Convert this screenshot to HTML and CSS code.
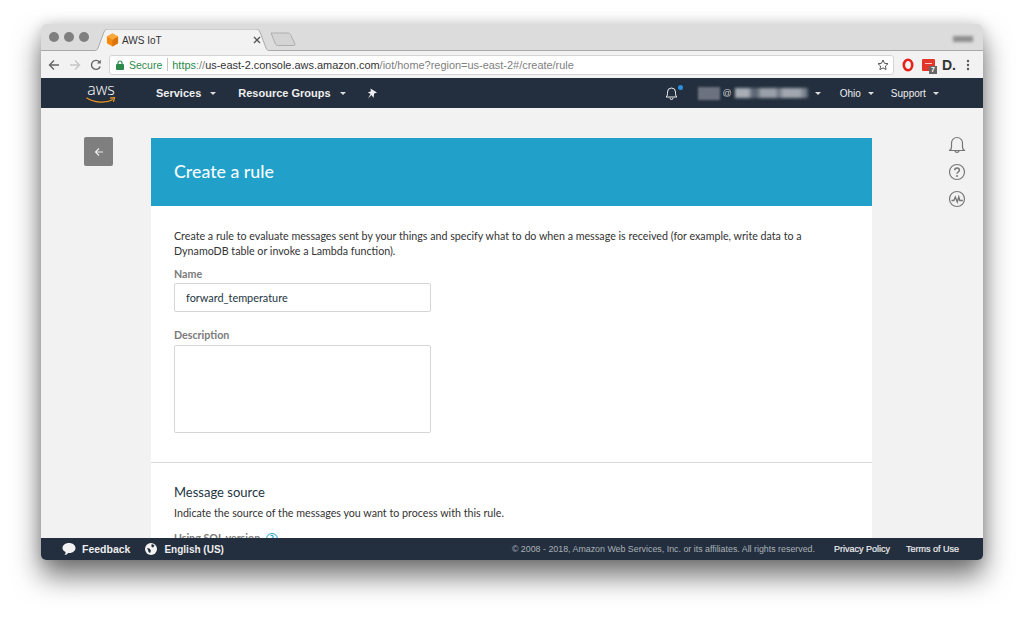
FILE: index.html
```html
<!DOCTYPE html>
<html lang="en">
<head>
    <meta charset="UTF-8">
    <meta name="viewport" content="width=device-width, initial-scale=1.0">
    <title>AWS IoT - Create a rule</title>
    <link rel="stylesheet" href="styles.css">
</head>
<body>
    <div class="window">
        <!-- Browser tab strip -->
        <div class="tabstrip">
            <div class="lights"><span></span><span></span><span></span></div>
            <div class="tab">
                <svg class="tab-shape" width="178" height="22" viewBox="0 0 178 22"><path d="M0 22h1c2 0 3-1 4-3L11 3c1-2 2-3 4-3h148c2 0 3 1 4 3l6 16c1 2 2 3 4 3h1" fill="#f2f2f2" stroke="#a9a9a9"/></svg>
                <svg class="tab-icon" width="13" height="14" viewBox="0 0 14 14"><path d="M7 0l6 3.2v7.400L7 14l-6-3.400V3.200z" fill="#f58a0b"/><path d="M7 6.600l6-3.400v7.400L7 14z" fill="#d9730a"/><path d="M7 0l6 3.200-6 3.400-6-3.400z" fill="#fba83a"/></svg>
                <span class="tab-title">AWS IoT</span>
                <svg class="tab-close" width="8" height="8" viewBox="0 0 8 8"><path d="M1 1l6 6M7 1L1 7" stroke="#555" stroke-width="1.300"/></svg>
            </div>
            <svg class="new-tab" width="26" height="14" viewBox="0 0 26 14"><path d="M1 1h17c1 0 2 .5 2.500 1.500L25 12c.3 1-.2 1.500-1 1.500H8c-1 0-2-.5-2.500-1.500L1 1z" fill="#d4d4d4" stroke="#aeaeae"/></svg>
            <span class="profile"></span>
        </div>

        <!-- Browser toolbar -->
        <div class="toolbar">
            <svg class="tool" width="12" height="12" viewBox="0 0 12 12"><path d="M11 6H2M6 1.500L1.500 6 6 10.500" fill="none" stroke="#666" stroke-width="1.400"/></svg>
            <svg class="tool" width="12" height="12" viewBox="0 0 12 12"><path d="M1 6h9M6 1.500L10.500 6 6 10.500" fill="none" stroke="#c6c6c6" stroke-width="1.400"/></svg>
            <svg class="tool" width="12" height="12" viewBox="0 0 12 12"><path d="M10.200 7.500A4.500 4.500 0 1 1 9.500 3" fill="none" stroke="#666" stroke-width="1.400"/><path d="M10.800 .8v3.800H7z" fill="#666"/></svg>
            <div class="omnibox">
                <svg class="lock" width="8" height="10" viewBox="0 0 8 10"><path d="M2 4.500V3a2 2 0 0 1 4 0v1.500" fill="none" stroke="#2a8a4a" stroke-width="1.200"/><rect y="4" width="8" height="6" rx="1" fill="#2a8a4a"/></svg>
                <span class="secure">Secure</span>
                <span class="omni-sep"></span>
                <span class="url"><span class="url-https">https</span><span class="url-dim">://</span>us-east-2.console.aws.amazon.com<span class="url-dim">/iot/home?region=us-east-2#/create/rule</span></span>
                <svg class="star" width="12" height="12" viewBox="0 0 12 12"><path d="M6 1l1.500 3.300 3.500.4-2.600 2.400.7 3.500L6 8.900l-3.100 1.700.7-3.500L1 4.700l3.500-.4z" fill="none" stroke="#555"/></svg>
            </div>
            <svg class="ext-opera" width="12" height="14" viewBox="0 0 12 14"><ellipse cx="6" cy="7" rx="4.200" ry="5.200" fill="none" stroke="#e4211b" stroke-width="2.600"/></svg>
            <div class="ext-red"><span class="ext-marks"></span><span class="ext-badge">7</span></div>
            <span class="ext-d">D.</span>
            <svg class="ext-menu" width="4" height="12" viewBox="0 0 4 12"><circle cx="2" cy="2" r="1.200" fill="#555"/><circle cx="2" cy="6" r="1.200" fill="#555"/><circle cx="2" cy="10" r="1.200" fill="#555"/></svg>
        </div>

        <!-- AWS console nav -->
        <nav class="topnav">
            <div class="logo">
                <span class="logo-text">aws</span>
                <svg class="logo-smile" width="30" height="7" viewBox="0 0 30 7"><path d="M.5 .8C8 6 20 6.500 27 2.500" fill="none" stroke="#f29a1f" stroke-width="1.300"/><path d="M24 1.200l4.500-.6-1 4.200" fill="none" stroke="#f29a1f" stroke-width="1.200"/></svg>
            </div>
            <a class="nav-item nav-services">Services<i class="caret"></i></a>
            <a class="nav-item nav-groups">Resource Groups<i class="caret"></i></a>
            <svg class="nav-pin" width="11" height="11" viewBox="0 0 11 11"><path d="M3.500 .5l6.500 4-2.800 1L6.500 10 4.500 7 1 10.500 3.500 6 .8 4.300l3-.9z" fill="#eee"/></svg>
            <div class="bell-wrap">
                <svg width="13" height="14" viewBox="0 0 13 14"><path d="M1 11c1.500-1 1.500-2.500 1.500-5a4 4 0 0 1 8 0c0 2.500 0 4 1.500 5zM5 12a1.500 1.500 0 0 0 3 0" fill="none" stroke="#eee"/></svg>
                <span class="bell-dot"></span>
            </div>
            <span class="blur-name"></span>
            <span class="at">@</span>
            <span class="blur-account"></span>
            <i class="caret caret-account"></i>
            <a class="nav-light nav-ohio">Ohio<i class="caret"></i></a>
            <a class="nav-light nav-support">Support<i class="caret"></i></a>
        </nav>

        <main class="content">
            <div class="back-col">
                <button class="back-btn">
                    <svg width="10" height="10" viewBox="0 0 10 10"><path d="M9 5H1.500M5 1.500L1.500 5 5 8.500" fill="none" stroke="#eee" stroke-width="1.100"/></svg>
                </button>
            </div>

            <div class="card">
                <div class="card-head"><h1>Create a rule</h1></div>
                <div class="card-section">
                    <p class="intro">Create a rule to evaluate messages sent by your things and specify what to do when a message is received (for example, write data to a DynamoDB table or invoke a Lambda function).</p>
                    <label class="field-label">Name</label>
                    <div class="input">forward_temperature</div>
                    <label class="field-label label-desc">Description</label>
                    <div class="textarea"></div>
                </div>
                <div class="card-section section-source">
                    <h2>Message source</h2>
                    <p class="hint">Indicate the source of the messages you want to process with this rule.</p>
                    <label class="field-label label-sql">Using SQL version <span class="help">?</span></label>
                </div>
            </div>

            <div class="side-rail">
                <svg width="18" height="18" viewBox="0 0 18 18"><path d="M1 14.500c1.800-.5 2.500-1.500 2.500-3.500V7a5.500 5.500 0 0 1 11 0v4c0 2 .7 3 2.500 3.500zM7 14.500c0 2.500 4 2.500 4 0" fill="none" stroke="#777" stroke-width="1.200"/></svg>
                <svg width="18" height="18" viewBox="0 0 18 18"><circle cx="9" cy="9" r="7.500" fill="none" stroke="#777" stroke-width="1.200"/><path d="M6.700 7.200c0-3 4.700-3 4.700 0 0 1.800-2.400 1.800-2.400 3.600" fill="none" stroke="#777" stroke-width="1.500"/><circle cx="9" cy="13" r="1" fill="#777"/></svg>
                <svg width="18" height="18" viewBox="0 0 18 18"><circle cx="9" cy="9" r="7.500" fill="none" stroke="#777" stroke-width="1.200"/><path d="M3.500 10.500h2.300l1.500-3.500 2 5 1.500-5 1 3.500h3" fill="none" stroke="#777" stroke-width="1.400"/></svg>
            </div>
        </main>

        <footer class="footer">
            <svg class="foot-icon" width="14" height="12" viewBox="0 0 14 12"><path d="M7 0c3.800 0 6.500 2.200 6.500 5S10.800 10 7.500 10c-.5 0-1 0-1.300-.1C5.500 11 4 11.800 2.500 12c.7-.8 1.100-1.800 1.100-3C1.600 8.200.5 6.800.5 5 .5 2.200 3.200 0 7 0z" fill="#f2f2f2"/></svg>
            <a class="foot-link foot-feedback">Feedback</a>
            <svg class="foot-icon foot-globe" width="12" height="12" viewBox="0 0 12 12"><circle cx="6" cy="6" r="6" fill="#f2f2f2"/><path d="M6.500 1.200c1.500 0 2.500.6 3 1.500L8 4.500 6.500 4zM2 5l2.500.5L6 7.500 5 10 3.500 9 3 7z" fill="#232f3e"/></svg>
            <a class="foot-link foot-lang">English (US)</a>
            <span class="copyright">© 2008 - 2018, Amazon Web Services, Inc. or its affiliates. All rights reserved.</span>
            <a class="foot-link foot-small">Privacy Policy</a>
            <a class="foot-link foot-small foot-terms">Terms of Use</a>
        </footer>
    </div>
</body>
</html>
```

FILE: styles.css
```css
/* Screenshot of a browser window on a white desktop */
html, body {
    height: 100%;
}

body {
    margin: 0;
    background: #fff;
    overflow: hidden;
    font-family: 'Lato', sans-serif;
    color: #333;
}

.window {
    width: 942px;
    height: 536px;
    margin: 24px 0 0 41px;
    border-radius: 5px;
    overflow: hidden;
    display: flex;
    flex-direction: column;
    box-shadow: 0 16px 28px rgba(0, 0, 0, 0.55), 0 0 14px rgba(0, 0, 0, 0.15);
}

/* Tab strip */
.tabstrip {
    height: 27px;
    flex: none;
    display: flex;
    align-items: flex-end;
    background: #dcdcdc;
    box-sizing: border-box;
    border-bottom: 1px solid #a9a9a9;
}

.lights {
    display: flex;
    gap: 5px;
    margin: 0 0 8px 8px;
    align-self: flex-end;
}

.lights span {
    width: 10px;
    height: 10px;
    border-radius: 50%;
    background: #7f7f7f;
}

.tab {
    position: relative;
    width: 178px;
    height: 22px;
    margin: 0 0 -1px 4px;
    display: flex;
    align-items: center;
    font-family: 'Liberation Sans', sans-serif;
    font-size: 10px;
    color: #333;
}

.tab-shape {
    position: absolute;
    left: 0;
    top: 0;
}

.tab-icon {
    position: relative;
    margin-left: 13px;
}

.tab-title {
    position: relative;
    margin-left: 3px;
    flex: 1;
    padding-top: 1px;
}

.tab-close {
    position: relative;
    margin-right: 10px;
}

.new-tab {
    margin: 0 0 4px -1px;
}

.profile {
    width: 20px;
    height: 6px;
    margin: 0 10px 8px auto;
    background: #8f8f8f;
    filter: blur(1.5px);
}

/* Toolbar */
.toolbar {
    height: 27px;
    flex: none;
    display: flex;
    align-items: center;
    background: #f2f2f2;
    box-sizing: border-box;
    padding-left: 7px;
}

.tool {
    margin-right: 9px;
}

.tool + .tool + .tool {
    margin-right: 7px;
}

.omnibox {
    width: 785px;
    height: 20px;
    box-sizing: border-box;
    display: flex;
    align-items: center;
    background: #fff;
    border: 1px solid #d4d4d4;
    border-radius: 3px;
    font-family: 'Liberation Sans', sans-serif;
    font-size: 10.950px;
    color: #333;
    padding-left: 6px;
}

.secure {
    margin-left: 5px;
    font-size: 10.500px;
    color: #2a8a4a;
}

.omni-sep {
    width: 1px;
    height: 13px;
    margin: 0 4px 0 5px;
    background: #c4c4c4;
}

.url {
    flex: 1;
    white-space: nowrap;
}

.url-https {
    color: #2a8a4a;
}

.url-dim {
    color: #808080;
}

.star {
    margin-right: 4px;
}

.ext-opera {
    margin-left: 8px;
}

.ext-red {
    position: relative;
    width: 13px;
    height: 12px;
    margin-left: 8px;
    background: #e4352a;
    border-radius: 1px;
}

.ext-marks {
    position: absolute;
    left: 3px;
    top: 4px;
    width: 7px;
    height: 1px;
    background: #f7c9c5;
}

.ext-badge {
    position: absolute;
    right: -2px;
    bottom: -3px;
    width: 8px;
    height: 8px;
    background: #666;
    color: #fff;
    font: bold 7px/8px 'Liberation Sans', sans-serif;
    text-align: center;
}

.ext-d {
    margin-left: 7px;
    font: bold 14px 'Liberation Sans', sans-serif;
    color: #333;
}

.ext-menu {
    margin-left: 10px;
}

/* AWS nav */
.topnav {
    height: 30px;
    flex: none;
    display: flex;
    align-items: center;
    background: #232f3e;
    font-family: 'Liberation Sans', sans-serif;
    color: #eee;
    font-size: 11px;
}

.logo {
    display: flex;
    flex-direction: column;
    margin-left: 45px;
    width: 30px;
    height: 25px;
    align-items: center;
}

.logo-text {
    font-family: 'Open Sans', sans-serif;
    font-size: 16px;
    font-weight: 300;
    line-height: 17px;
    color: #fff;
}

.logo-smile {
    margin-top: -1px;
}

.nav-item {
    font-weight: bold;
    white-space: nowrap;
}

.nav-services {
    margin-left: 40px;
}

.nav-groups {
    margin-left: 22px;
}

.caret {
    display: inline-block;
    width: 0;
    height: 0;
    margin-left: 9px;
    vertical-align: 2px;
    border: 3px solid transparent;
    border-bottom-width: 0;
    border-top-color: #ddd;
}

.nav-pin {
    margin-left: 21px;
}

.bell-wrap {
    position: relative;
    display: flex;
    margin-left: 287px;
}

.bell-dot {
    position: absolute;
    right: -5px;
    top: -1px;
    width: 5px;
    height: 5px;
    border-radius: 50%;
    background: #2b8fe0;
}

.blur-name {
    width: 22px;
    height: 13px;
    margin-left: 20px;
    background: #6c7280;
    filter: blur(1px);
}

.at {
    margin-left: 3px;
    font-size: 9px;
    color: #ccc;
}

.blur-account {
    width: 73px;
    height: 10px;
    margin-left: 3px;
    background: linear-gradient(90deg, #a9aeb6 0 18%, #5e6775 24% 30%, #9aa0a9 36% 55%, #6a7280 60%, #a2a7af 66% 88%, #5e6775 100%);
    filter: blur(1.5px);
}

.caret-account {
    margin-left: 7px;
    vertical-align: baseline;
}

.nav-light {
    white-space: nowrap;
    font-size: 10px;
}

.nav-light .caret {
    margin-left: 7px;
}

.nav-ohio {
    margin-left: 19px;
}

.nav-support {
    margin-left: 17px;
}

/* Page content */
.content {
    flex: 1;
    min-height: 0;
    display: flex;
    background: #f2f2f2;
    overflow: hidden;
}

.back-col {
    width: 110px;
    flex: none;
}

.back-btn {
    display: flex;
    align-items: center;
    justify-content: center;
    width: 29px;
    height: 29px;
    margin: 29px 0 0 43px;
    padding: 0;
    border: none;
    border-radius: 2px;
    background: #7f7f7f;
}

.card {
    width: 721px;
    flex: none;
    margin-top: 30px;
    background: #fff;
}

.card-head {
    height: 68px;
    display: flex;
    align-items: center;
    padding: 0 0 2px 23px;
    box-sizing: border-box;
    background: #21a0c9;
}

h1 {
    margin: 0;
    font-size: 17.800px;
    font-weight: 500;
    color: #f4fbfd;
}

.card-section {
    padding: 23px 23px 0;
    border-bottom: 1px solid #d8d8d8;
    height: 257px;
    box-sizing: border-box;
}

.section-source {
    border-bottom: none;
    padding-top: 21px;
}

.intro, .hint {
    margin: 0;
    font-size: 10.700px;
    line-height: 14.500px;
    color: #333;
}

.field-label {
    display: block;
    margin-top: 9px;
    font-size: 10.700px;
    font-weight: 700;
    line-height: 14px;
    color: #7b7b7b;
}

.input {
    width: 257px;
    height: 29px;
    box-sizing: border-box;
    margin-top: 2px;
    padding-left: 11px;
    border: 1px solid #d5d5d5;
    border-radius: 2px;
    font-size: 10.900px;
    line-height: 27px;
    color: #24363f;
}

.label-desc {
    margin-top: 16px;
}

.textarea {
    width: 257px;
    height: 88px;
    box-sizing: border-box;
    margin-top: 3px;
    border: 1px solid #d5d5d5;
    border-radius: 2px;
}

h2 {
    margin: 0 0 5px;
    font-size: 13px;
    font-weight: 400;
    line-height: 17px;
    color: #24363f;
}

.label-sql {
    margin-top: 10px;
}

.help {
    display: inline-block;
    width: 12px;
    height: 12px;
    margin-left: 3px;
    box-sizing: border-box;
    border: 1px solid #21a0c9;
    border-radius: 50%;
    font-size: 9px;
    line-height: 10px;
    text-align: center;
    color: #21a0c9;
}

.side-rail {
    flex: 1;
    display: flex;
    flex-direction: column;
    gap: 9px;
    padding: 28px 0 0 76px;
}

/* Footer */
.footer {
    height: 22px;
    flex: none;
    display: flex;
    align-items: center;
    background: #232f3e;
    font-family: 'Liberation Sans', sans-serif;
    font-size: 10.500px;
    color: #eee;
}

.foot-icon {
    margin-left: 21px;
}

.foot-link {
    margin-left: 6px;
    font-weight: bold;
    white-space: nowrap;
}

.foot-feedback {
    margin-left: 6px;
}

.foot-globe {
    margin-left: 15px;
}

.foot-lang {
    margin-left: 7px;
    font-size: 10px;
}

.copyright {
    margin-left: auto;
    font-size: 8.850px;
    color: #a9afb7;
    white-space: nowrap;
}

.foot-small {
    margin-left: 19px;
    font-size: 9px;
    font-weight: normal;
    -webkit-text-stroke: 0.2px #eee;
}

.foot-terms {
    margin-left: 16px;
    margin-right: 24px;
}
```
